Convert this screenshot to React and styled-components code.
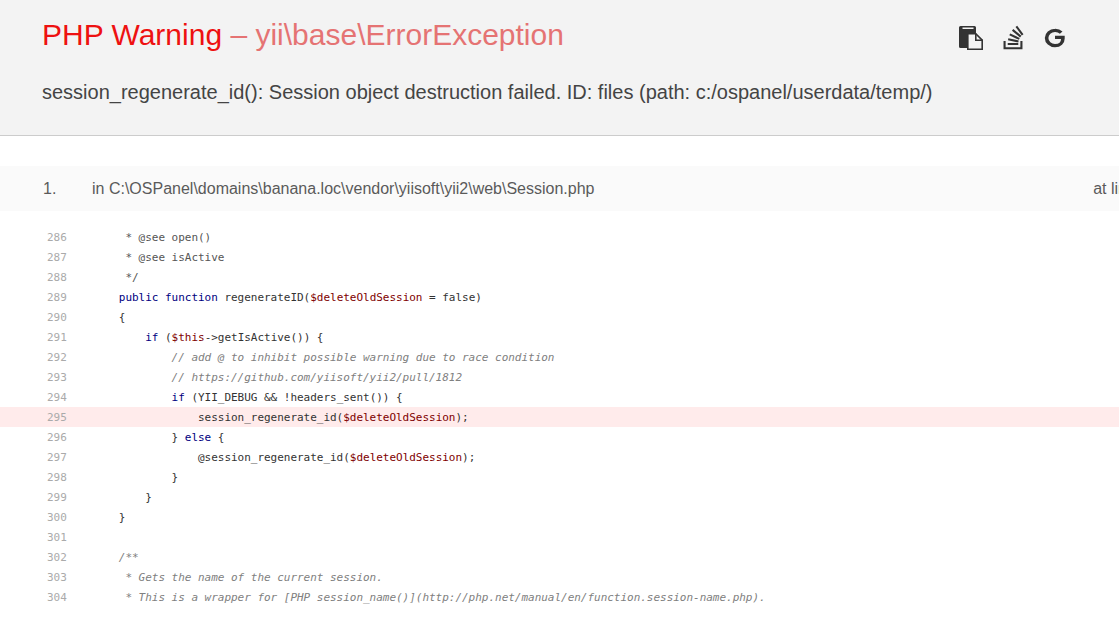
import React from "react";
import styled, { createGlobalStyle } from "styled-components";
import { FaStackOverflow } from "react-icons/fa";

const GlobalStyle = createGlobalStyle`
  html, body {
    margin: 0;
    padding: 0;
    height: 617px;
    overflow: hidden;
    background: #fff;
    font-family: "Liberation Sans", Arial, sans-serif;
  }
`;

const Header = styled.header`
  display: flex;
  justify-content: space-between;
  align-items: flex-start;
  box-sizing: border-box;
  height: 136px;
  padding: 17px 53px 0 42px;
  background: #f3f3f3;
  border-bottom: 1px solid #ccc;
`;

const Title = styled.h1`
  margin: 0;
  font-size: 30px;
  line-height: 36px;
  font-weight: 400;
  color: #ee1111;
`;

const TitleClass = styled.span`
  color: #e57373;
`;

const Message = styled.h2`
  margin: 21px 0 0;
  font-size: 20px;
  line-height: 36px;
  font-weight: 400;
  color: #444;
`;

const Icons = styled.div`
  display: flex;
  align-items: center;
  gap: 17px;
  margin-top: 7px;
  color: #333;
`;

const CallRow = styled.div`
  display: flex;
  justify-content: space-between;
  width: 1167px;
  box-sizing: border-box;
  margin-top: 30px;
  padding: 0 0 0 43px;
  height: 45px;
  align-items: center;
  background: #fafafa;
  font-size: 16px;
  color: #5a5a5a;
`;

const CallLeft = styled.div`
  display: flex;
`;

const CallNumber = styled.span`
  width: 49px;
`;

const CodeBlock = styled.div`
  margin-top: 16px;
`;

const Line = styled.div`
  display: flex;
  height: 20px;
  align-items: center;
  background: ${(p) => (p.$error ? "#ffebeb" : "transparent")};
`;

const LineNumber = styled.span`
  box-sizing: border-box;
  width: 92.4px;
  padding-left: 47px;
  font-family: "DejaVu Sans Mono", monospace;
  font-size: 11px;
  color: #aaa;
`;

const Code = styled.pre`
  margin: 0;
  font-family: "DejaVu Sans Mono", monospace;
  font-size: 11px;
  letter-spacing: -0.022px;
  color: #333;
`;

const tokenColors = {
  k: "#000080",
  v: "#800000",
  c: "#808080",
  d: "#555",
};

const Token = styled.span`
  color: ${(p) => tokenColors[p.$type]};
  font-style: ${(p) => (p.$type === "c" ? "italic" : "normal")};
`;

const lines = [
  [286, [["d", "     * @see open()"]]],
  [287, [["d", "     * @see isActive"]]],
  [288, [["d", "     */"]]],
  [289, [["k", "    public function"], ["", " regenerateID("], ["v", "$deleteOldSession"], ["", " = false)"]]],
  [290, [["", "    {"]]],
  [291, [["k", "        if"], ["", " ("], ["v", "$this"], ["", "->getIsActive()) {"]]],
  [292, [["c", "            // add @ to inhibit possible warning due to race condition"]]],
  [293, [["c", "            // https://github.com/yiisoft/yii2/pull/1812"]]],
  [294, [["k", "            if"], ["", " (YII_DEBUG && !headers_sent()) {"]]],
  [295, [["", "                session_regenerate_id("], ["v", "$deleteOldSession"], ["", ");"]]],
  [296, [["", "            } "], ["k", "else"], ["", " {"]]],
  [297, [["", "                @session_regenerate_id("], ["v", "$deleteOldSession"], ["", ");"]]],
  [298, [["", "            }"]]],
  [299, [["", "        }"]]],
  [300, [["", "    }"]]],
  [301, [["", " "]]],
  [302, [["c", "    /**"]]],
  [303, [["c", "     * Gets the name of the current session."]]],
  [304, [["c", "     * This is a wrapper for [PHP session_name()](http://php.net/manual/en/function.session-name.php)."]]],
];

const CopyIcon = () => (
  <svg width="24" height="24" viewBox="0 0 24 24">
    <path fill="#333" d="M1.5 0h14A1.5 1.5 0 0 1 17 1.500V8H9v14H1.500A1.500 1.500 0 0 1 0 20.500v-19A1.500 1.500 0 0 1 1.500 0z" />
    <rect x="3.500" y="1.500" width="11" height="1.500" fill="#f3f3f3" />
    <path fill="#f3f3f3" stroke="#333" strokeWidth="1.600" d="M8.800 7.800h8l6.400 6.400v9H8.800z" />
    <path fill="#333" d="M16 7.500h1.600v6h6v1.600H16z" />
  </svg>
);

const GoogleIcon = () => (
  <svg width="22" height="20" viewBox="0 0 22 22" preserveAspectRatio="none">
    <path
      fill="none"
      stroke="#333"
      strokeWidth="3.6"
      d="M17.200 5.200A8.200 8.200 0 0 0 11 2.600a8.400 8.400 0 0 0 0 16.800c4.800 0 7.900-3.300 7.900-7.900V10.200H11"
    />
  </svg>
);

const App = () => (
  <>
    <GlobalStyle />
    <Header>
      <div>
        <Title>
          PHP Warning <TitleClass>– yii\base\ErrorException</TitleClass>
        </Title>
        <Message>
          session_regenerate_id(): Session object destruction failed. ID: files (path: c:/ospanel/userdata/temp/)
        </Message>
      </div>
      <Icons>
        <CopyIcon />
        <FaStackOverflow size={27} />
        <GoogleIcon />
      </Icons>
    </Header>
    <CallRow>
      <CallLeft>
        <CallNumber>1.</CallNumber>
        <span>in C:\OSPanel\domains\banana.loc\vendor\yiisoft\yii2\web\Session.php</span>
      </CallLeft>
      <span>at line 295</span>
    </CallRow>
    <CodeBlock>
      {lines.map(([number, tokens]) => (
        <Line key={number} $error={number === 295}>
          <LineNumber>{number}</LineNumber>
          <Code>
            {tokens.map(([type, text], i) => (
              <Token key={i} $type={type}>
                {text}
              </Token>
            ))}
          </Code>
        </Line>
      ))}
    </CodeBlock>
  </>
);

export default App;
